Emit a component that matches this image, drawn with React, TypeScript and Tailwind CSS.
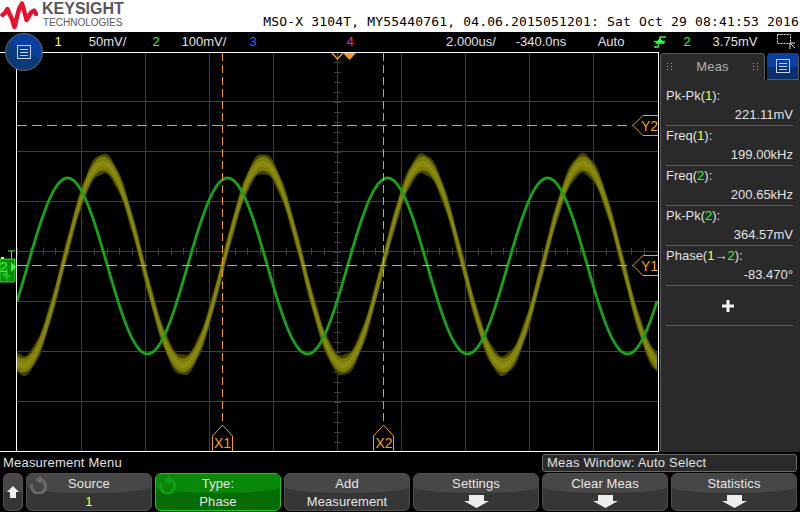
const sans = "font-['Liberation_Sans',Arial,sans-serif]";
const ORANGE = "#f59e1c";

// scope traces, page coordinates
function wave(peak: number, mid: number, amp: number, offset = 0, jitter = 0) {
  const pts: string[] = [];
  for (let x = 17; x <= 657; x += 2) {
    // cheap repeatable noise for the envelope edge
    const noise = jitter * Math.sin(x * 12.9898 + offset * 78.233);
    const y = mid - amp * Math.cos(((x - peak) / 160) * Math.PI * 2) + offset + noise;
    pts.push(`${x},${y.toFixed(1)}`);
  }
  return pts;
}

function band(peak: number, mid: number, amp: number, half: number, jitter = 0) {
  const top = wave(peak, mid, amp, -half, jitter);
  const bottom = wave(peak, mid, amp, half, jitter).reverse();
  return [...top, ...bottom].join(" ");
}

const VERTICALS = [81, 145, 209, 273, 337, 401, 465, 529, 593];
const HORIZONTALS = [101, 151, 201, 251, 301, 351, 401];

function Scope() {
  const hTicks = Array.from({ length: 50 }, (_, i) => 17 + i * 12.8);
  const vTicks = Array.from({ length: 40 }, (_, i) => 62 + i * 10);
  return (
    <svg viewBox="17 53 641 398" className="block w-[641px] h-[398px]">
      <g stroke="#3f3f3f" strokeWidth="1" shapeRendering="crispEdges">
        {VERTICALS.map((x) => (
          <line key={x} x1={x + 0.5} x2={x + 0.5} y1="53" y2="451" />
        ))}
        {HORIZONTALS.map((y) => (
          <line key={y} x1="17" x2="658" y1={y + 0.5} y2={y + 0.5} />
        ))}
        {hTicks.map((x) => (
          <line key={x} x1={Math.round(x) + 0.5} x2={Math.round(x) + 0.5} y1="248" y2="255" />
        ))}
        {vTicks.map((y) => (
          <line key={y} x1="334" x2="341" y1={y + 0.5} y2={y + 0.5} />
        ))}
      </g>

      {/* channel 1 has a noisy envelope */}
      <polygon points={band(103, 264.5, 101, 10, 1)} fill="#454500" />
      <polygon points={band(103, 264.5, 101, 7)} fill="#7a7a08" />
      <polygon points={band(103, 264.5, 101, 3)} fill="#8a8a10" />
      <polyline points={wave(67.5, 266, 88).join(" ")} fill="none" stroke="#17a317" strokeWidth="2.8" />

      <g stroke={ORANGE} strokeWidth="1" fill="none" shapeRendering="crispEdges">
        <line x1="222.5" x2="222.5" y1="53" y2="425" strokeDasharray="8 4" />
        <line x1="383.5" x2="383.5" y1="53" y2="425" strokeDasharray="8 4" />
        <line x1="17" x2="633" y1="125.5" y2="125.5" strokeDasharray="10 5" />
        <line x1="17" x2="633" y1="265.5" y2="265.5" strokeDasharray="10 5" />
      </g>
      <g stroke={ORANGE} strokeWidth="1" fill="#000">
        <path d="M212.5 451V436L222.5 425L232.5 436V451" />
        <path d="M373.5 451V436L383.5 425L393.5 436V451" />
        <path d="M658 115.5H643L633 125.5L643 135.5H658" />
        <path d="M658 255.5H643L633 265.5L643 275.5H658" />
        <path d="M332 53L337.5 59L343 53" fill="none" strokeWidth="1.5" />
      </g>
      <path d="M343 53H356L349.5 60Z" fill={ORANGE} />
      <g fill={ORANGE} fontSize="14" fontFamily="Liberation Sans, Arial, sans-serif">
        <text x="222.5" y="448" textAnchor="middle">X1</text>
        <text x="384" y="448" textAnchor="middle">X2</text>
        <text x="641" y="131">Y2</text>
        <text x="641" y="271">Y1</text>
      </g>
    </svg>
  );
}

function MenuIcon({ size = 14 }: { size?: number }) {
  return (
    <svg width={size} height={size} viewBox="0 0 14 14" fill="none" stroke="#c8d4e4" strokeWidth="1">
      <rect x="0.5" y="0.5" width="13" height="13" />
      <path d="M3 4.5H11M3 7.5H11M3 10.5H11" />
    </svg>
  );
}

function Knob({ color }: { color: string }) {
  return (
    <svg width="20" height="18" viewBox="0 0 20 18" fill="none" className="absolute left-[2px] top-[2px]">
      <path d="M3 8A7 7 0 1 0 16 7.5C15 4.5 13 3.5 10.5 3.5" stroke={color} strokeWidth="3" />
      <path d="M12 0L6 4L12 8Z" fill={color} />
    </svg>
  );
}

function DownArrow() {
  return (
    <svg width="25" height="13" viewBox="0 0 25 13" fill="#eeeeee">
      <path d="M5 0H20V6H25L12.5 13L0 6H5Z" />
    </svg>
  );
}

function SoftKey({ label, value, valueClass, arrow, knob, active }: { label: string; value?: string; valueClass?: string; arrow?: boolean; knob?: boolean; active?: boolean }) {
  const shell = active ? "bg-[#066c06] border-[#1fc81f]" : "bg-[#363636] border-[#505050]";
  const gloss = active ? "bg-[#0a880a]" : "bg-[#474747]";
  return (
    <div className={`relative w-[126px] h-[38px] rounded-[6px] border overflow-hidden ${shell}`}>
      <div className={`absolute left-0 right-0 top-0 h-[19px] rounded-b-[50%_6px] ${gloss}`} />
      {knob && <Knob color={active ? "#0fa00f" : "#6a6a6a"} />}
      <div className="relative flex flex-col items-center h-full pt-[1px] tracking-[0.1px]">
        <span className="h-[18px] leading-[18px] text-[13px] text-[#e6e6e6]">{label}</span>
        {value && <span className={`h-[18px] leading-[18px] text-[13px] ${valueClass ?? "text-[#e6e6e6]"}`}>{value}</span>}
        {arrow && <span className="mt-[2px]"><DownArrow /></span>}
      </div>
    </div>
  );
}

function Measurement({ label, value }: { label: React.ReactNode; value: string }) {
  return (
    <div className="h-[40px] ml-[5px] mr-[7px] border-b border-[#5a5a5a] flex flex-col text-[13px] text-[#e2e2e2] leading-[19px]">
      <div>{label}</div>
      <div className="text-right">{value}</div>
    </div>
  );
}

const One = () => <span className="text-[#ffff33]">1</span>;
const Two = () => <span className="text-[#33ff33]">2</span>;

function Grip() {
  return (
    <svg width="5" height="7" viewBox="0 0 5 7" fill="#a8a8a8">
      <path d="M0 0h1v1H0zM4 0h1v1H4zM0 3h1v1H0zM4 3h1v1H4zM0 6h1v1H0zM4 6h1v1H4z" />
    </svg>
  );
}

export default function App() {
  return (
    <div className={`relative w-[800px] h-[512px] overflow-hidden bg-black ${sans}`}>
      {/* Header */}
      <header className="h-8 bg-white flex items-start">
        <svg width="38" height="32" viewBox="0 0 38 32" fill="none" className="shrink-0">
          <path
            d="M2.5 15L5 13L7.5 9L10 15L12 19L14.5 27L17 17L19 9L22 3.5L24.5 12L26.5 20L28.5 17L31 12.5L34 10.5L36 14"
            stroke="#e8112d"
            strokeWidth="4.4"
            strokeLinejoin="round"
            strokeLinecap="round"
          />
        </svg>
        <div className="ml-[4px] flex flex-col text-[#57585b]">
          <span className="mt-[1px] text-[16px] leading-[16px] font-bold">KEYSIGHT</span>
          <span className="mt-[1px] text-[10px] leading-[10px] pl-[1px]">TECHNOLOGIES</span>
        </div>
        <span className="ml-auto mt-[14px] pr-[1px] font-['DejaVu_Sans_Mono',monospace] text-[13px] leading-[16px] tracking-[0.17px] text-black whitespace-pre">
          MSO-X 3104T, MY55440761, 04.06.2015051201: Sat Oct 29 08:41:53 2016
        </span>
      </header>

      {/* Status bar */}
      <div className="h-5 pl-[40px] pb-[1px] flex items-center text-[13px] text-[#e0e0e0] text-center whitespace-nowrap">
        <span className="w-[36px] text-[#ffff33]">1</span>
        <span className="w-[63px]">50mV/</span>
        <span className="w-[34px] text-[#33ff33]">2</span>
        <span className="w-[62px]">100mV/</span>
        <span className="w-[36px] text-[#3366ff]">3</span>
        <span className="w-[158px] text-[#ff2090]">4</span>
        <span className="w-[84px]">2.000us/</span>
        <span className="w-[56px]">-340.0ns</span>
        <span className="w-[84px]">Auto</span>
        <svg width="14" height="14" viewBox="0 0 14 14" fill="none" stroke="#33ff33" strokeWidth="1.3">
          <path d="M1 12H5L7 2H13" />
          <path d="M1 6.5H12" />
          <path d="M7 4L3.5 8H10.5Z" fill="#33ff33" />
        </svg>
        <span className="w-[40px] text-[#33ff33]">2</span>
        <span className="w-[56px]">3.75mV</span>
        <svg width="23" height="16" viewBox="0 0 23 16" fill="none" stroke="#e6e6e6" className="ml-[14px]">
          <rect x="0.5" y="0.5" width="13" height="9" strokeDasharray="2 1" />
          <path d="M13 9V15M13 9L18 14M13 9H18" />
        </svg>
      </div>

      {/* Graticule and measurement panel */}
      <div className="h-[400px] flex items-start">
        <div className="relative w-4 h-full border-y border-white">
          <svg width="17" height="34" viewBox="0 0 17 34" className="absolute left-0 top-[196px]" fill="none">
            <path d="M8 2H15M11.5 2V10" stroke="#33ff33" strokeWidth="1" />
            <path d="M1 8H4V10H1Z" fill="#ffff33" />
            <path d="M0 10H15V32L13 33H0Z" fill="#0a8a0a" stroke="#33ff33" strokeWidth="0.8" />
            <path d="M11 13L16 18L11 23Z" fill="#33ff33" />
            <text x="0" y="23" fontSize="14" fill="#33ff33" fontFamily="Liberation Sans, Arial, sans-serif">2</text>
            <path d="M2 25H6V21H8M7 23V27M3 27H11M5 29H9M6.5 31H7.5" stroke="#33ff33" strokeWidth="0.8" />
          </svg>
        </div>
        <div className="border border-white h-full bg-black">
          <Scope />
        </div>
        <aside className="ml-[1px] w-[140px] h-[399px] mt-[1px] flex flex-col">
          <div className="flex h-[27px]">
            <div className="w-[105px] pb-[1px] flex items-center justify-between px-[6px] bg-[#2a2a2a] border-t border-l border-r border-[#5a5a5a] rounded-t-[4px] text-[13px] tracking-[0.2px] text-[#b0b0b0]">
              <Grip />
              <span>Meas</span>
              <Grip />
            </div>
            <div className="ml-[2px] w-[32px] flex items-center justify-center rounded-t-[4px] bg-[linear-gradient(#0a3fa6_55%,#08306e_55%)] border-b border-r border-[#5a5a5a]">
              <MenuIcon />
            </div>
          </div>
          <div className="flex-1 bg-[#2a2a2a] border-l border-[#5a5a5a]">
            <div className="mt-[6px]">
              <Measurement label={<>Pk-Pk(<One />):</>} value="221.11mV" />
              <Measurement label={<>Freq(<One />):</>} value="199.00kHz" />
              <Measurement label={<>Freq(<Two />):</>} value="200.65kHz" />
              <Measurement label={<>Pk-Pk(<Two />):</>} value="364.57mV" />
              <Measurement label={<>Phase(<One />→<Two />):</>} value="-83.470°" />
            </div>
            <div className="h-[40px] ml-[5px] mr-[7px] border-b border-[#5a5a5a] flex items-center justify-center">
              <svg width="12" height="12" viewBox="0 0 12 12" fill="#f4f4f4" className="mr-[4px]">
                <path d="M4.5 0H7.5V4.5H12V7.5H7.5V12H4.5V7.5H0V4.5H4.5Z" />
              </svg>
            </div>
          </div>
        </aside>
      </div>

      {/* Softkey menu */}
      <div className="h-[21px] flex items-center px-[3px]">
        <span className="text-[13px] tracking-[0.2px] text-[#e0e0e0]">Measurement Menu</span>
        <div className="ml-auto w-[255px] h-[18px] pl-[4px] flex items-center rounded-[3px] border border-[#6a6a6a] bg-[#2a2a2a] text-[13px] tracking-[0.2px] text-[#e0e0e0]">
          Meas Window: Auto Select
        </div>
      </div>
      <div className="flex pl-[3px] gap-[3px]">
        <div className="w-[20px] h-[38px] rounded-[6px] border border-[#505050] bg-[linear-gradient(#474747_50%,#363636_50%)] flex items-center justify-center">
          <svg width="12" height="12" viewBox="0 0 12 12" fill="#f0f0f0">
            <path d="M6 0L12 6H9V12H3V6H0Z" />
          </svg>
        </div>
        <SoftKey knob label="Source" value="1" valueClass="text-[#ffff33]" />
        <SoftKey knob active label="Type:" value="Phase" />
        <SoftKey label="Add" value="Measurement" />
        <SoftKey label="Settings" arrow />
        <SoftKey label="Clear Meas" arrow />
        <SoftKey label="Statistics" arrow />
      </div>

      {/* Round menu button sits over the header edge */}
      <div className="absolute left-[5px] top-[33px] w-[38px] h-[38px] rounded-full border border-[#6a6a6a] bg-[conic-gradient(from_-60deg,#0b3fa0_0deg_170deg,#0a3a78_170deg_360deg)] flex items-center justify-center">
        <MenuIcon />
      </div>
    </div>
  );
}
